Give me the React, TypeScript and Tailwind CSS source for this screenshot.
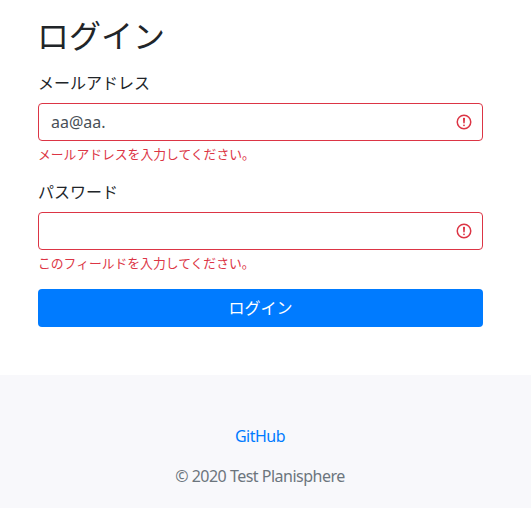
const font = "font-['Noto_Sans','Noto_Sans_CJK_JP',sans-serif]";

function InvalidIcon() {
    return (
        <svg
            className="absolute right-[10px] top-[10px] h-[18px] w-[18px]"
            viewBox="0 0 12 12"
            fill="none"
            stroke="#dc3545"
        >
            <circle cx="6" cy="6" r="4.5" />
            <path strokeLinejoin="round" d="M5.8 3.6h.4L6 6.5z" />
            <circle cx="6" cy="8.2" r=".6" fill="#dc3545" stroke="none" />
        </svg>
    );
}

function Field({ label, value, error }: { label: string; value: string; error: string }) {
    return (
        <div className="mb-4">
            <label className="mb-2 block leading-6">{label}</label>
            <div className="relative">
                <input
                    type="text"
                    readOnly
                    value={value}
                    className="block h-[38px] w-full rounded border border-[#dc3545] bg-white px-3 text-[#495057] outline-none"
                />
                <InvalidIcon />
            </div>
            <div className="mt-1 text-[12.8px] leading-[19.2px] text-[#dc3545]">{error}</div>
        </div>
    );
}

export default function App() {
    return (
        <div className={`${font} min-h-[508px] bg-white text-base text-[#212529]`}>
            <main className="pl-[38px] pr-[48px] pt-[17px]">
                <h2 className="mb-[16px] -ml-px text-[32px] leading-[38px] font-normal">ログイン</h2>
                <Field label="メールアドレス" value="aa@aa." error="メールアドレスを入力してください。" />
                <Field label="パスワード" value="" error="このフィールドを入力してください。" />
                <button className="block h-[38px] w-full rounded bg-[#007bff] text-white">ログイン</button>
            </main>
            <footer className="mt-12 bg-[#f8f8fb] pt-[49px] pr-[11px] pb-5 text-center tracking-[-0.5px]">
                <p className="mb-4 leading-6">
                    <a href="#" className="text-[#007bff]">GitHub</a>
                </p>
                <p className="leading-6 text-[#6c757d]">© 2020 Test Planisphere</p>
            </footer>
        </div>
    );
}
